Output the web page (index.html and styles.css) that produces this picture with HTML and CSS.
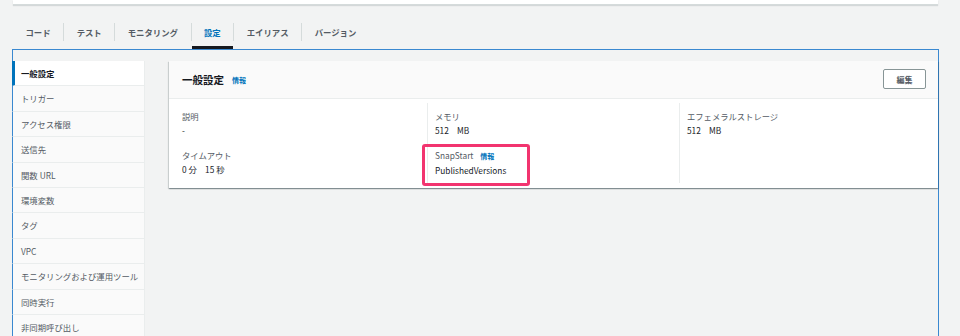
FILE: index.html
```html
<!DOCTYPE html>
<html lang="ja">
<head>
<meta charset="utf-8">
<title>一般設定</title>
<link rel="stylesheet" href="styles.css">
</head>
<body>
<div class="topcard"></div>
<nav class="tabs">
  <span class="tab">コード</span><span class="sep"></span>
  <span class="tab">テスト</span><span class="sep"></span>
  <span class="tab">モニタリング</span><span class="sep"></span>
  <span class="tab active">設定</span><span class="sep"></span>
  <span class="tab">エイリアス</span><span class="sep"></span>
  <span class="tab">バージョン</span>
</nav>
<div class="panel">
  <ul class="sidenav">
    <li class="item active">一般設定</li>
    <li class="item">トリガー</li>
    <li class="item">アクセス権限</li>
    <li class="item">送信先</li>
    <li class="item">関数 URL</li>
    <li class="item">環境変数</li>
    <li class="item">タグ</li>
    <li class="item">VPC</li>
    <li class="item">モニタリングおよび運用ツール</li>
    <li class="item">同時実行</li>
    <li class="item">非同期呼び出し</li>
  </ul>
  <section class="card">
    <header class="card-head">
      <div class="title-wrap"><h2 class="title">一般設定</h2><a class="info">情報</a></div>
      <button class="btn">編集</button>
    </header>
    <div class="card-body">
      <div class="col first">
        <div class="label">説明</div>
        <div class="value">-</div>
        <div class="label gap">タイムアウト</div>
        <div class="value">0 分&emsp;15 秒</div>
      </div>
      <div class="col">
        <div class="label">メモリ</div>
        <div class="value">512&emsp;MB</div>
        <div class="label gap">SnapStart <a class="info inline">情報</a></div>
        <div class="value">PublishedVersions</div>
        <div class="highlight"></div>
      </div>
      <div class="col">
        <div class="label">エフェメラルストレージ</div>
        <div class="value">512&emsp;MB</div>
      </div>
    </div>
  </section>
</div>
</body>
</html>
```
FILE: styles.css
```css
* { box-sizing: border-box; }
html, body { margin: 0; padding: 0; }
body {
  background: #f2f3f3;
  font-family: "Noto Sans CJK JP", "Noto Sans", "Open Sans", sans-serif;
  color: #16191f;
  width: 960px;
  height: 336px;
  overflow: hidden;
}
.topcard {
  margin-left: 13px;
  width: 925px;
  height: 5px;
  background: #fff;
  border-bottom: 1px solid #d5dbdb;
  box-shadow: 0 1px 1px rgba(0, 28, 36, 0.12);
}
.tabs {
  display: flex;
  align-items: flex-start;
  padding: 18px 0 0 13px;
  height: 44px;
}
.tab {
  height: 26px;
  line-height: 18px;
  padding: 0 12.5px;
  font-size: 8.4px;
  font-weight: 700;
  color: #545b64;
  white-space: nowrap;
}
.tab.active {
  color: #0073bb;
  border-bottom: 3px solid #16191f;
}
.sep {
  width: 1px;
  height: 18px;
  background: #d5dbdb;
}
.panel {
  margin-left: 12px;
  width: 927px;
  height: 300px;
  border: 1px solid #3a88d0;
  border-bottom: none;
  padding-top: 11px;
  display: flex;
  align-items: flex-start;
  gap: 24px;
}
.sidenav {
  list-style: none;
  margin: 0 0 0 -1px;
  padding: 0;
  width: 133px;
  flex: none;
}
.item {
  height: 25.4px;
  line-height: 24.4px;
  padding-left: 8px;
  font-size: 8.4px;
  color: #545b64;
  background: #fafafa;
  border-bottom: 1px solid #eaeded;
  border-right: 1px solid #eaeded;
  border-left: 1px solid #3a88d0;
  white-space: nowrap;
}
.item.active {
  background: #fff;
  color: #16191f;
  font-weight: 700;
  border-left: 3px solid #0073bb;
  padding-left: 6px;
}
.card {
  flex: 1;
  background: #fff;
  box-shadow: 0 1px 1px 0 rgba(0, 28, 36, 0.3), 1px 1px 1px 0 rgba(0, 28, 36, 0.12), -1px 1px 1px 0 rgba(0, 28, 36, 0.12);
}
.card-head {
  height: 38px;
  background: #fafafa;
  border-bottom: 1px solid #eaeded;
  display: flex;
  align-items: center;
  justify-content: space-between;
  padding: 0 12px 0 13px;
}
.title-wrap { display: flex; align-items: center; }
.title {
  margin: 0;
  font-size: 10.5px;
  font-weight: 700;
  color: #16191f;
  line-height: 16px;
}
.info {
  font-size: 7px;
  font-weight: 700;
  color: #0073bb;
  margin-left: 8px;
}
.info.inline { margin-left: 5px; }
.btn {
  width: 43px;
  height: 20px;
  padding: 0;
  background: #fff;
  border: 1px solid #879596;
  border-radius: 2px;
  font-family: inherit;
  font-size: 8px;
  font-weight: 700;
  color: #545b64;
  margin-top: -1px;
}
.card-body {
  display: grid;
  grid-template-columns: 245px 252px 1fr;
  padding: 4px 0 5px 13px;
}
.col {
  position: relative;
  padding: 6px 0 6px 7px;
  border-left: 1px solid #eaeded;
  height: 80px;
}
.col.first { border-left: none; padding-left: 0; }
.label {
  font-size: 8.3px;
  line-height: 14px;
  color: #545b64;
  white-space: nowrap;
}
.label.gap { margin-top: 10px; }
.value {
  font-size: 8.3px;
  line-height: 15px;
  color: #16191f;
  font-weight: 400;
  white-space: nowrap;
}
.highlight {
  position: absolute;
  left: -6px;
  top: 41px;
  width: 108px;
  height: 42px;
  border: 3px solid #f2346f;
  border-radius: 3px;
}
```
